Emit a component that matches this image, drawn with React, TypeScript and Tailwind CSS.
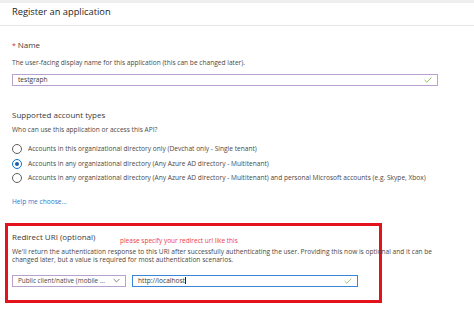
const font = { fontFamily: '"Open Sans", "Noto Sans", sans-serif' };

function Check({ color = "#8bc34a" }: { color?: string }) {
  return (
    <svg width="8" height="6" viewBox="0 0 8 6" fill="none">
      <path d="M0.8 3.2 L2.9 5.2 L7.2 0.8" stroke={color} strokeWidth="0.9" strokeLinecap="round" strokeLinejoin="round" />
    </svg>
  );
}

function Radio({ checked, label }: { checked?: boolean; label: string }) {
  return (
    <div className="flex items-center h-[14.5px] pl-[12px]">
      <span
        className={
          "w-[10px] h-[10px] rounded-full border flex items-center justify-center shrink-0 " +
          (checked ? "border-[#0078d4]" : "border-[#605e5c]")
        }
      >
        {checked && <span className="w-[4px] h-[4px] rounded-full bg-[#1f5fa8]" />}
      </span>
      <span className="ml-[6px] text-[6.6px] leading-[10px] text-[#4a4847] whitespace-nowrap">{label}</span>
    </div>
  );
}

export default function App() {
  return (
    <div className="w-[474px] h-[332px] bg-white overflow-hidden text-[#323130]" style={font}>
      <div className="h-[3px] bg-[#eeeeee]" />
      {/* header */}
      <div className="h-[23px] border-b border-[#e6e6e6] pl-3 text-[9.3px] leading-[18px] text-[#252423]">
        Register an application
      </div>

      {/* name */}
      <div className="pl-3 mt-[13px] text-[8px] leading-[12px] text-[#3b3a39]">
        <span className="text-[#d13438] text-[7px]">* </span>Name
      </div>
      <div className="pl-3 mt-[5px] text-[6.6px] leading-[12px] text-[#4a4847]">
        The user-facing display name for this application (this can be changed later).
      </div>
      <div className="ml-3 mt-[5px] w-[426px] h-[12px] border border-[#b8a2cd] flex items-center justify-between pl-[5px] pr-[5px]">
        <span className="text-[6.6px] leading-[10px] text-[#3b3a39]">testgraph</span>
        <Check />
      </div>

      {/* account types */}
      <div className="pl-3 mt-[23px] text-[8px] leading-[12px] text-[#3b3a39]">Supported account types</div>
      <div className="pl-3 mt-[3px] text-[6.6px] leading-[12px] text-[#4a4847]">
        Who can use this application or access this API?
      </div>
      <div className="mt-[6px]">
        <Radio label="Accounts in this organizational directory only (Devchat only - Single tenant)" />
        <Radio checked label="Accounts in any organizational directory (Any Azure AD directory - Multitenant)" />
        <Radio label="Accounts in any organizational directory (Any Azure AD directory - Multitenant) and personal Microsoft accounts (e.g. Skype, Xbox)" />
      </div>
      <div className="pl-3 mt-[10px] text-[6.6px] leading-[12px] text-[#2b7bd0]">Help me choose...</div>

      {/* redirect uri, annotated */}
      <div className="relative ml-[5px] mt-[15px] w-[377px] h-[80px] border-[3px] border-[#e3121d] pl-[4px] pt-[5px]">
        <span className="absolute left-[112px] top-[9px] text-[6.5px] leading-[12px] text-[#ee3c48]">
          please specify your redirect url like this
        </span>
        <div className="text-[8px] leading-[12px] text-[#3b3a39]">Redirect URI (optional)</div>
        <div className="mt-[5px] text-[6.6px] leading-[8px] text-[#4a4847] whitespace-nowrap">
          <div>
            We'll return the authentication response to this URI after successfully authenticating the user. Providing this now is optional and it can be
          </div>
          <div>changed later, but a value is required for most authentication scenarios.</div>
        </div>
        <div className="mt-[11px] flex gap-[6px]">
          <div className="w-[114px] h-[12px] border border-[#b8a2cd] flex items-center justify-between pl-[5px] pr-[5px]">
            <span className="text-[6.4px] leading-[10px] text-[#4a4847]">Public client/native (mobile ...</span>
            <svg width="7" height="5" viewBox="0 0 7 5" fill="none">
              <path d="M0.6 1 L3.5 3.9 L6.4 1" stroke="#605e5c" strokeWidth="0.8" />
            </svg>
          </div>
          <div className="w-[226px] h-[12px] border border-[#3a86d4] flex items-center justify-between pl-[5px] pr-[5px]">
            <span className="text-[6.6px] leading-[10px] text-[#3b3a39]">
              http://localhost<span className="inline-block w-[0.6px] h-[7px] bg-[#222] align-middle" />
            </span>
            <Check color="#9ccc65" />
          </div>
        </div>
      </div>
    </div>
  );
}
